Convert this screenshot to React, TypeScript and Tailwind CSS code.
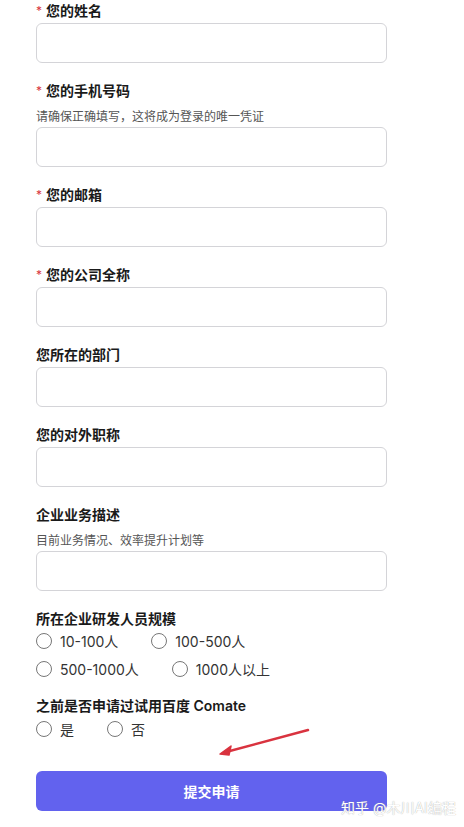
const fields = [
  { label: '您的姓名', required: true },
  { label: '您的手机号码', required: true, hint: '请确保正确填写，这将成为登录的唯一凭证' },
  { label: '您的邮箱', required: true },
  { label: '您的公司全称', required: true },
  { label: '您所在的部门' },
  { label: '您的对外职称' },
  { label: '企业业务描述', hint: '目前业务情况、效率提升计划等' },
]

function Radio({ text }: { text: string }) {
  return (
    <label className="flex items-center h-5 mr-[33px]">
      <span className="w-[16px] h-[16px] rounded-full border border-[#777] mr-[8px] bg-white" />
      <span className="text-[14px] text-[#333]">{text}</span>
    </label>
  )
}

export default function App() {
  return (
    <div
      className="relative w-[464px] h-[827px] bg-white overflow-hidden"
      style={{ fontFamily: 'Inter, "Noto Sans CJK SC", sans-serif' }}
    >
      <div className="w-[351px] ml-[36px] pt-px">
        {fields.map((f) => (
          <div key={f.label} className="mb-[18px]">
            <div className="h-5 leading-5 text-[14px] font-semibold text-[#1a1a1a] flex items-center">
              {f.required && <span className="text-[#d9363e] mr-[4px] text-[12px] font-normal">*</span>}
              <span>{f.label}</span>
            </div>
            {f.hint && (
              <div className="mt-[8px] h-4 leading-4 text-[12px] text-[#555]">{f.hint}</div>
            )}
            <div className={`${f.hint ? 'mt-[2px]' : 'mt-[2px]'} h-[40px] rounded-[6px] border border-[#d4d4d8] bg-white`} />
          </div>
        ))}

        <div className="h-5 leading-5 text-[14px] font-semibold text-[#1a1a1a]">所在企业研发人员规模</div>
        <div className="mt-[2px] flex">
          <Radio text="10-100人" />
          <Radio text="100-500人" />
        </div>
        <div className="mt-[8px] flex">
          <Radio text="500-1000人" />
          <Radio text="1000人以上" />
        </div>

        <div className="mt-[17px] h-5 leading-5 text-[14px] font-semibold text-[#1a1a1a]">之前是否申请过试用百度 Comate</div>
        <div className="mt-[3px] flex">
          <Radio text="是" />
          <Radio text="否" />
        </div>

        <button className="mt-[32px] w-full h-[40px] rounded-[6px] bg-[#6262ee] text-white text-[14px] font-bold">
          提交申请
        </button>
      </div>

      <svg className="absolute left-0 top-0" width="464" height="827">
        <line x1="308" y1="730" x2="226" y2="752" stroke="#d9333f" strokeWidth="2.5" strokeLinecap="round" />
        <path d="M220 754 L231 746 L229 755 Z" fill="#d9333f" stroke="#d9333f" strokeWidth="1.5" strokeLinejoin="round" />
      </svg>

      <div
        className="absolute left-[341px] top-[797px] text-[14px] text-white"
        style={{ textShadow: '0 0 1px #999' }}
      >
        知乎 @木川AI编程
      </div>
    </div>
  )
}
